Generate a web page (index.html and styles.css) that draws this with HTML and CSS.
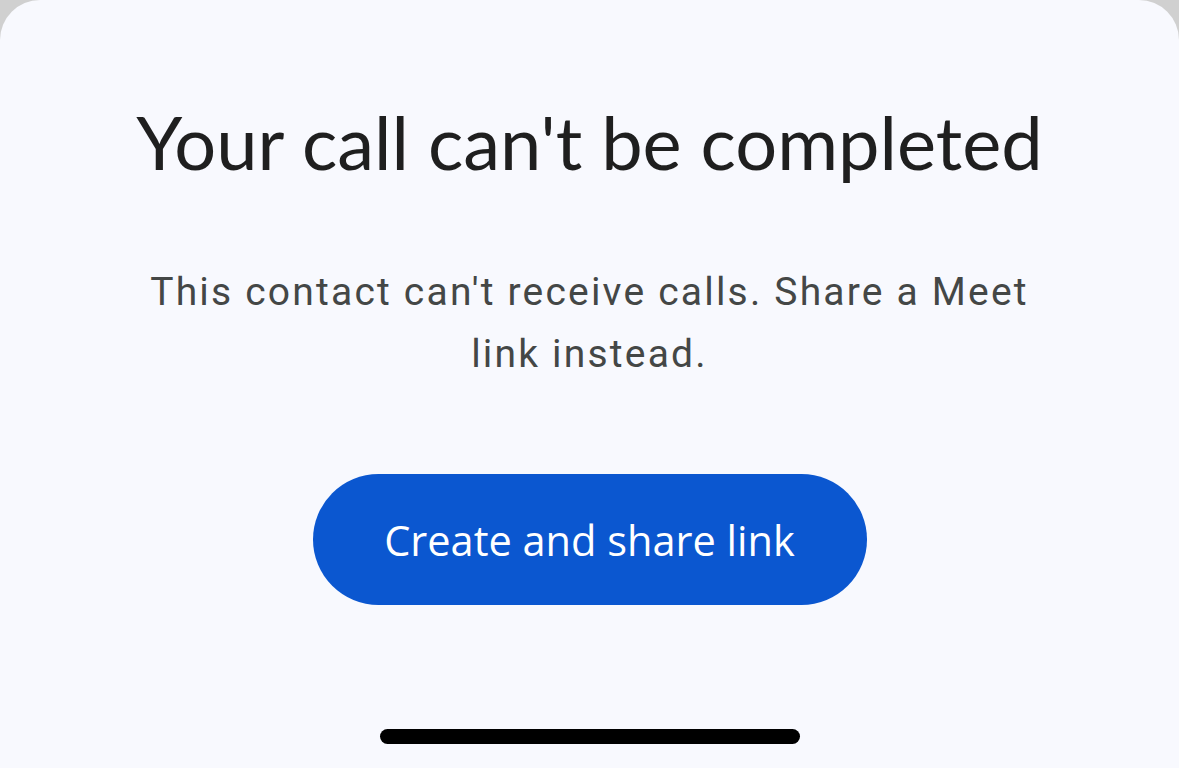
FILE: index.html
```html
<!DOCTYPE html>
<html lang="en">
  <head>
    <meta charset="UTF-8" />
    <meta name="viewport" content="width=device-width, initial-scale=1.0" />
    <title>Call can't be completed</title>
    <link rel="stylesheet" href="styles.css">
  </head>
  <body>
    <div class="sheet">
      <h1 class="title">Your call can't be completed</h1>
      <p class="message">This contact can't receive calls. Share a Meet link instead.</p>
      <button class="share-btn">Create and share link</button>
      <div class="home-bar"></div>
    </div>
  </body>
</html>
```

FILE: styles.css
```css
html,
body {
  margin: 0;
  padding: 0;
  height: 100%;
}

body {
  background-color: #d0d0d0;
  font-family: Roboto, "Noto Sans", sans-serif;
}

.sheet {
  box-sizing: border-box;
  height: 768px;
  background-color: #f8f9fe;
  border-radius: 40px 40px 0 0;
  display: flex;
  flex-direction: column;
  align-items: center;
  padding-top: 98px;
}

.title {
  margin: 0;
  font-family: Lato, sans-serif;
  font-weight: 400;
  font-size: 74px;
  line-height: 88px;
  color: #1f1f1f;
  text-align: center;
}

.message {
  margin: 75px 0 0;
  width: 900px;
  font-size: 39px;
  letter-spacing: 2.2px;
  line-height: 62px;
  color: #444746;
  text-align: center;
}

.share-btn {
  margin-top: 89px;
  width: 554px;
  height: 131px;
  border: none;
  border-radius: 66px;
  background-color: #0b57d0;
  color: #ffffff;
  font-family: "Open Sans", sans-serif;
  font-weight: 500;
  font-size: 41.5px;
  cursor: pointer;
}

.home-bar {
  margin-top: auto;
  margin-bottom: 24px;
  width: 420px;
  height: 15px;
  border-radius: 8px;
  background-color: #000000;
}
```
